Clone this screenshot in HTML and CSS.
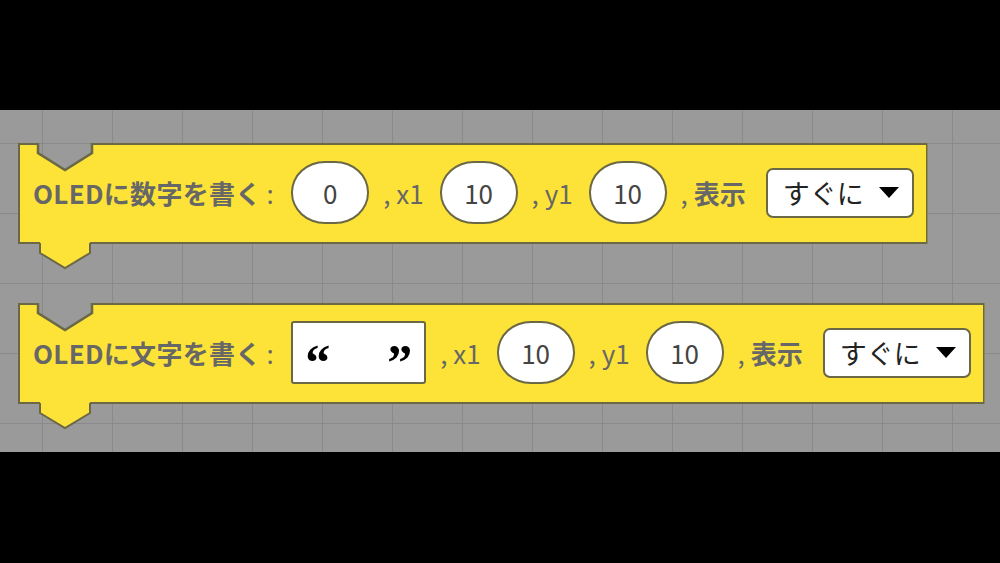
FILE: index.html
```html
<!DOCTYPE html>
<html lang="ja">
<head>
<meta charset="utf-8">
<title>OLED blocks</title>
<link rel="stylesheet" href="styles.css">
</head>
<body>
<div class="workspace">
  <div class="block">
    <div class="body">
      <span class="label bold">OLEDに数字を書く<span class="colon">:</span></span>
      <span class="oval">0</span>
      <span class="label">, x1</span>
      <span class="oval">10</span>
      <span class="label">, y1</span>
      <span class="oval">10</span>
      <span class="label show">, <b class="bold">表示</b></span>
      <span class="dropdown"><span class="dd-text">すぐに</span><svg class="caret" viewBox="0 0 20 11" width="20" height="11"><polygon points="0,0 20,0 10,11" fill="#000"/></svg></span>
    </div>
    <svg class="notch" width="80" height="30" viewBox="0 0 80 30"><path d="M20 0 V10 L47 27 L74 10 V0" fill="none" stroke="#6b6846" stroke-width="2.5"/></svg>
    <svg class="tab" width="80" height="30" viewBox="0 0 80 30"><polygon points="22,0 22,11 47,26 72,11 72,0" fill="#fde337"/><path d="M22 1 V11 L47 26 L72 11 V1" fill="none" stroke="#6b6846" stroke-width="2"/></svg>
  </div>
  <div class="block">
    <div class="body">
      <span class="label bold">OLEDに文字を書く<span class="colon">:</span></span>
      <span class="textfield"><span class="q">“</span><span class="q">”</span></span>
      <span class="label">, x1</span>
      <span class="oval">10</span>
      <span class="label">, y1</span>
      <span class="oval">10</span>
      <span class="label show">, <b class="bold">表示</b></span>
      <span class="dropdown"><span class="dd-text">すぐに</span><svg class="caret" viewBox="0 0 20 11" width="20" height="11"><polygon points="0,0 20,0 10,11" fill="#000"/></svg></span>
    </div>
    <svg class="notch" width="80" height="30" viewBox="0 0 80 30"><path d="M20 0 V10 L47 27 L74 10 V0" fill="none" stroke="#6b6846" stroke-width="2.5"/></svg>
    <svg class="tab" width="80" height="30" viewBox="0 0 80 30"><polygon points="22,0 22,11 47,26 72,11 72,0" fill="#fde337"/><path d="M22 1 V11 L47 26 L72 11 V1" fill="none" stroke="#6b6846" stroke-width="2"/></svg>
  </div>
</div>
</body>
</html>
```
FILE: styles.css
```css
html, body {
  margin: 0;
  padding: 0;
  background: #000;
}
body {
  width: 1000px;
  height: 563px;
  overflow: hidden;
  font-family: "Noto Sans CJK JP", "Noto Sans", sans-serif;
}
.workspace {
  margin-top: 110px;
  height: 342px;
  box-sizing: border-box;
  padding: 33px 0 0 18px;
  background-color: #9a9a9a;
  background-image:
    linear-gradient(to right, #8a8a8a 0, #8a8a8a 1px, transparent 1px),
    linear-gradient(to bottom, #8a8a8a 0, #8a8a8a 1px, transparent 1px);
  background-size: 70px 70px;
  background-position: 42px 33px;
  display: flex;
  flex-direction: column;
  align-items: flex-start;
  gap: 59px;
}
.block {
  position: relative;
}
.body {
  box-sizing: border-box;
  height: 101px;
  background: #fde337;
  border: 2px solid #6b6846;
  display: flex;
  align-items: center;
  padding: 0 12px 2px 13px;
  clip-path: polygon(0 0, 20px 0, 20px 10px, 47px 27px, 74px 10px, 74px 0, 100% 0, 100% 100%, 0 100%);
}
.body > * {
  flex-shrink: 0;
}
.notch {
  position: absolute;
  left: 0;
  top: 0;
}
.tab {
  position: absolute;
  left: 0;
  top: 99px;
}
.label {
  color: #676767;
  font-size: 26px;
  white-space: pre;
  margin: 0 16px 0 14px;
}
.label.show {
  margin-right: 20px;
}
.label.bold:first-child {
  margin-left: 0;
  margin-right: 17px;
  letter-spacing: 0.3px;
}
.bold {
  font-weight: 700;
}
.colon {
  font-weight: 400;
  margin-left: 5px;
}
.oval {
  box-sizing: border-box;
  width: 78px;
  height: 63px;
  border: 2px solid #6b6846;
  border-radius: 34px / 31px;
  background: #fff;
  display: flex;
  align-items: center;
  justify-content: center;
  font-size: 26px;
  color: #444;
}
.textfield {
  box-sizing: border-box;
  width: 135px;
  height: 63px;
  border: 2px solid #6b6846;
  border-radius: 3px;
  background: #fff;
  display: flex;
  align-items: center;
  justify-content: space-between;
  padding: 0 12px;
}
.q {
  font-family: "Liberation Serif", serif;
  font-weight: 700;
  font-size: 50px;
  line-height: 1;
  color: #000;
  position: relative;
  top: 9px;
}
.dropdown {
  box-sizing: border-box;
  width: 148px;
  height: 50px;
  border: 2px solid #6b6846;
  border-radius: 7px;
  background: #fff;
  display: flex;
  align-items: center;
  padding: 0 14px 0 15px;
  gap: 15px;
  font-size: 27px;
  color: #222;
}
.dd-text {
  white-space: nowrap;
}
.caret {
  display: block;
  flex-shrink: 0;
}
```
